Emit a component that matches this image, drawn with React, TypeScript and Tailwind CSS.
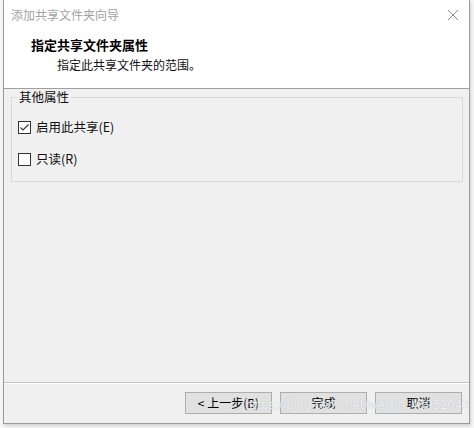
import React from 'react';

const font = "font-['Noto_Sans_CJK_SC',sans-serif]";

const Checkbox = ({ checked, label }: { checked?: boolean; label: string }) => (
  <div className="flex items-center h-[20px] gap-[5px] pl-[1px]">
    <div className="w-[13px] h-[13px] border border-[#333333] bg-white flex items-center justify-center">
      {checked && (
        <svg width="11" height="11" viewBox="0 0 11 11">
          <polyline points="1.5,5.5 4,8 9.5,2.5" fill="none" stroke="#333333" strokeWidth="1.1" />
        </svg>
      )}
    </div>
    <span className="text-[12.5px] leading-[20px] text-[#111]">{label}</span>
  </div>
);

const Button = ({ children }: { children: React.ReactNode }) => (
  <button className="w-[87px] h-[22px] bg-[#e1e1e1] border border-[#adadad] text-[12px] leading-[20px] text-black">
    {children}
  </button>
);

export default function App() {
  return (
    <div className={`w-[474px] h-[428px] bg-[#f6f6f6] relative overflow-hidden ${font}`}>
      <div className="ml-[3px] w-[467px] h-[424px] flex flex-col border-x border-b border-[#9a9a9a] bg-[#f0f0f0] shadow-[1px_2px_3px_rgba(0,0,0,0.15)]">
        {/* title bar */}
        <div className="h-[30px] bg-white flex items-center justify-between pl-[7px] pr-[10px]">
          <span className="text-[12px] text-[#a3a3a3] leading-[16px]">添加共享文件夹向导</span>
          <svg width="12" height="12" viewBox="0 0 12 12">
            <path d="M1 1 L11 11 M11 1 L1 11" stroke="#8a8a8a" strokeWidth="1" />
          </svg>
        </div>

        {/* header */}
        <div className="h-[59px] bg-white border-b border-[#a0a0a0] pt-[6px]">
          <div className="pl-[27px] text-[13px] font-bold leading-[18px] text-black">指定共享文件夹属性</div>
          <div className="pl-[53px] pt-[2px] text-[12px] leading-[17px] text-[#111]">指定此共享文件夹的范围。</div>
        </div>

        {/* body */}
        <div className="h-[293px] px-[7px] pr-[6px]">
          <fieldset className="border border-[#d9d9d9] px-[5px] pb-[12px]">
            <legend className="px-[2px] text-[12.5px] leading-[16px] text-[#111]">其他属性</legend>
            <div className="mt-[12px] flex flex-col gap-[12px]">
              <Checkbox checked label="启用此共享(E)" />
              <Checkbox label="只读(R)" />
            </div>
          </fieldset>
        </div>

        {/* footer */}
        <div className="flex-1 border-t border-[#c4c4c4] shadow-[inset_0_1px_0_#ffffff] flex justify-end items-start gap-[8px] pt-[9px] pr-[7px]">
          <Button>&lt; 上一步(B)</Button>
          <Button>完成</Button>
          <Button>取消</Button>
        </div>
      </div>

      {/* watermark */}
      <div className="absolute left-[245px] top-[397px] text-[11.5px] leading-[16px] font-['DejaVu_Sans',sans-serif] text-white/80 [text-shadow:0_0_1px_rgba(120,130,150,0.55)] pointer-events-none">
        https://blog.csdn.net/weixin_43932043
      </div>
    </div>
  );
}
